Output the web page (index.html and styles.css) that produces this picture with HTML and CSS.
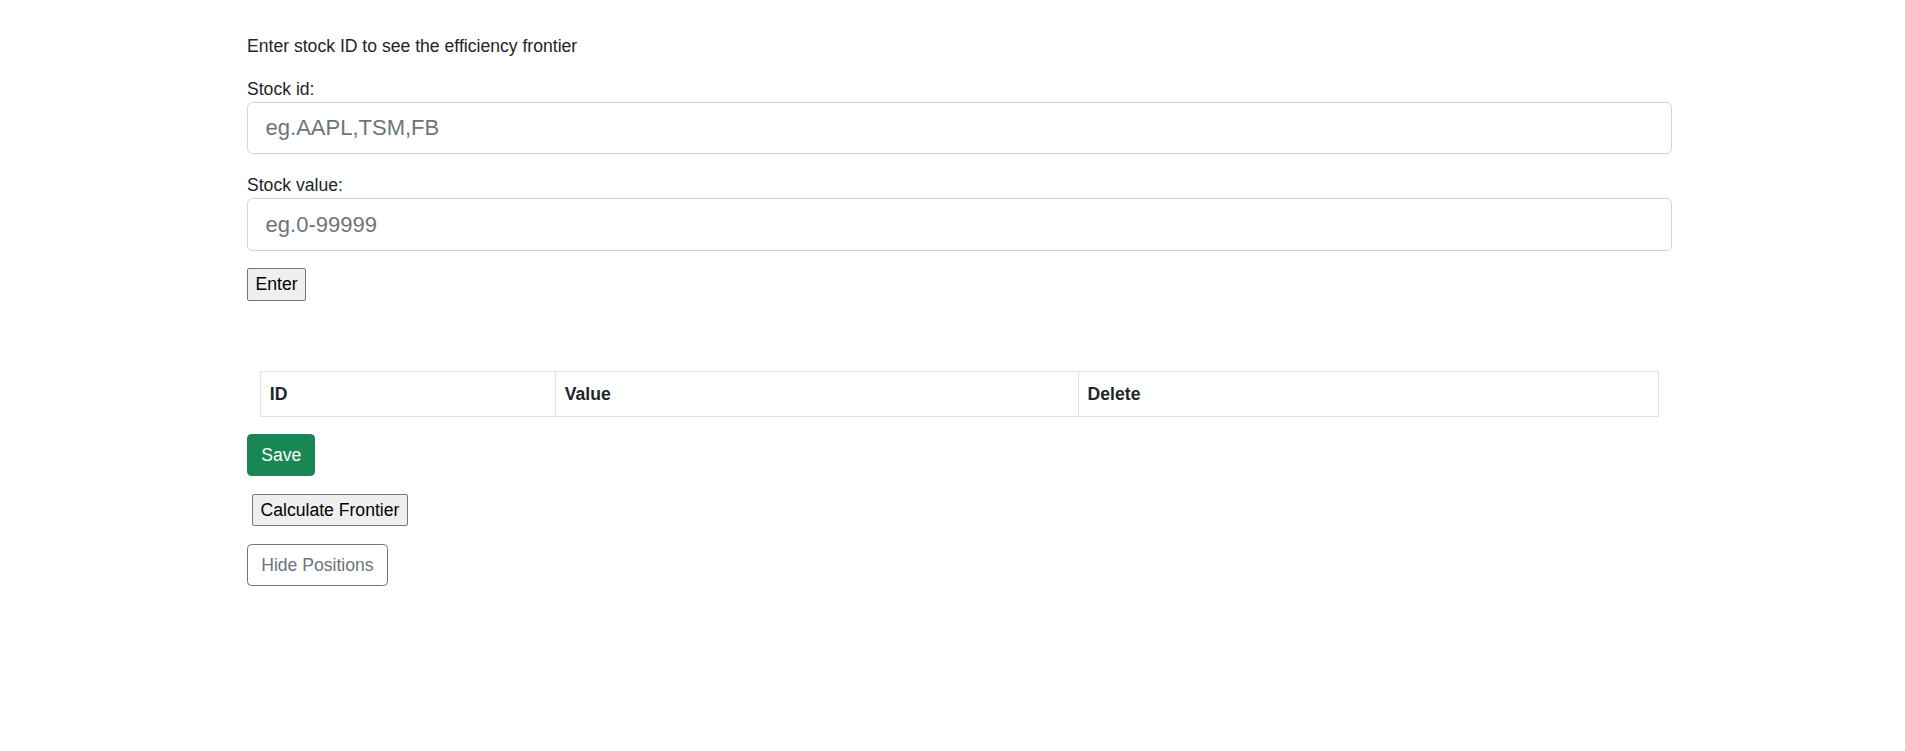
FILE: index.html
```html
<!DOCTYPE html>
<html lang="en">
<head>
<meta charset="utf-8">
<title>Efficiency Frontier</title>
<link rel="stylesheet" href="styles.css">
</head>
<body>
<div class="container">
  <p class="intro">Enter stock ID to see the efficiency frontier</p>
  <div class="group">
    <label class="label" for="sid">Stock id:</label>
    <input class="input" id="sid" type="text" placeholder="eg.AAPL,TSM,FB">
  </div>
  <div class="group">
    <label class="label" for="sval">Stock value:</label>
    <input class="input" id="sval" type="text" placeholder="eg.0-99999">
  </div>
  <div class="enter-row"><button class="native-btn" type="button">Enter</button></div>

  <div class="table-wrap">
    <table class="positions">
      <thead>
        <tr>
          <th class="col-id">ID</th>
          <th class="col-value">Value</th>
          <th class="col-delete">Delete</th>
        </tr>
      </thead>
    </table>
  </div>

  <div class="action-row"><button class="btn btn-success" type="button">Save</button></div>
  <div class="action-row"><button class="native-btn indent" type="button">Calculate Frontier</button></div>
  <div class="action-row"><button class="btn btn-outline" type="button">Hide Positions</button></div>
</div>
</body>
</html>
```
FILE: styles.css
```css
* { box-sizing: border-box; }

html, body {
  margin: 0;
  background: #ffffff;
}

body {
  padding-left: 14px;
  font-family: "Liberation Sans", Arial, sans-serif;
  font-size: 17.6px;
  line-height: 26.4px;
  color: #212529;
}

.container {
  width: 1425px;
  margin: 0 auto;
  padding-top: 32.7px;
}

.intro {
  margin: 0 0 16.6px;
}

.group {
  margin-bottom: 17.6px;
}

.label {
  display: block;
}

.input {
  display: block;
  width: 100%;
  height: 52.4px;
  margin: 0;
  padding: 8.8px 17.6px;
  font-family: inherit;
  font-size: 22px;
  line-height: 33px;
  color: #212529;
  background: #fff;
  border: 1px solid #ced4da;
  border-radius: 5.3px;
  outline: none;
}

.input::placeholder {
  color: #6c757d;
  opacity: 1;
}

.native-btn {
  margin: 0;
  padding: 2px 7.5px;
  font-family: inherit;
  font-size: 17.6px;
  line-height: 26.4px;
  color: #000;
  background: #efefef;
  border: 1px solid #767676;
  border-radius: 2px;
  appearance: none;
}

.native-btn.indent {
  margin-left: 5px;
}

.enter-row {
  display: flex;
}

.table-wrap {
  margin-top: 70.2px;
  padding: 0 13px;
}

.positions {
  width: 100%;
  border-collapse: collapse;
  table-layout: fixed;
  margin-bottom: 17.3px;
}

.positions th {
  padding: 8.8px;
  text-align: left;
  font-weight: 700;
  color: #212529;
  border: 1px solid #dee2e6;
  line-height: 26.4px;
}

.col-id { width: 21.1%; }
.col-value { width: 37.4%; }
.col-delete { width: 41.5%; }

.action-row {
  display: flex;
  margin-bottom: 18px;
}

.btn {
  margin: 0;
  padding: 6.6px 13.2px;
  font-family: inherit;
  font-size: 17.6px;
  line-height: 26.4px;
  font-weight: 400;
  border: 1px solid transparent;
  border-radius: 4.4px;
  appearance: none;
}

.btn-success {
  color: #fff;
  background: #198754;
  border-color: #198754;
}

.btn-outline {
  color: #6c757d;
  background: #fff;
  border-color: #6c757d;
}
```
